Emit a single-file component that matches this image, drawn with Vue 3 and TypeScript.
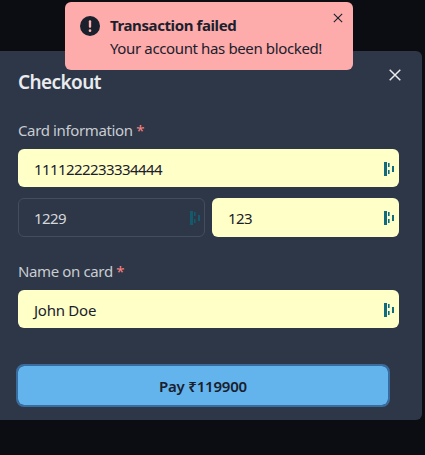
<script setup lang="ts">
const toastTitle: string = 'Transaction failed'
const toastText: string = 'Your account has been blocked!'
</script>

<template>
  <div class="page">
    <div class="toast">
      <svg class="alert" viewBox="0 0 24 24" width="20" height="20">
        <circle cx="12" cy="12" r="12" fill="#1a202c" />
        <rect x="10.6" y="5.2" width="2.8" height="9" rx="1.2" fill="#feb2b2" />
        <circle cx="12" cy="17.6" r="1.6" fill="#feb2b2" />
      </svg>
      <div class="toast-body">
        <div class="toast-title">{{ toastTitle }}</div>
        <div class="toast-text">{{ toastText }}</div>
      </div>
      <svg class="toast-close" viewBox="0 0 12 12" width="10" height="10">
        <path d="M1 1 11 11M11 1 1 11" stroke="#1a202c" stroke-width="1.3" fill="none" />
      </svg>
    </div>

    <section class="modal">
      <header class="head">
        <h2>Checkout</h2>
        <svg class="close" viewBox="0 0 12 12" width="12" height="12">
          <path d="M.7.7 11.3 11.3M11.3.7.7 11.3" stroke="#e9ebee" stroke-width="1.5" fill="none" />
        </svg>
      </header>

      <div class="form">
        <label class="label first">Card information <span class="req">*</span></label>
        <div class="field filled">
          <span class="digits">1111222233334444</span>
          <svg class="mark" viewBox="0 0 10 14" width="10" height="14"><path d="M0 0h3v14H0zM4 1h1.6v4H4zM4 8h1.6v4H4zM8 4h2v6H8z" /></svg>
        </div>
        <div class="row">
          <div class="field empty">
            <span class="digits">1229</span>
            <svg class="mark" viewBox="0 0 10 14" width="10" height="14"><path d="M0 0h3v14H0zM4 1h1.6v4H4zM4 8h1.6v4H4zM8 4h2v6H8z" /></svg>
          </div>
          <div class="field filled">
            <span class="digits">123</span>
            <svg class="mark" viewBox="0 0 10 14" width="10" height="14"><path d="M0 0h3v14H0zM4 1h1.6v4H4zM4 8h1.6v4H4zM8 4h2v6H8z" /></svg>
          </div>
        </div>
        <label class="label second">Name on card <span class="req">*</span></label>
        <div class="field filled">
          <span class="name">John Doe</span>
          <svg class="mark" viewBox="0 0 10 14" width="10" height="14"><path d="M0 0h3v14H0zM4 1h1.6v4H4zM4 8h1.6v4H4zM8 4h2v6H8z" /></svg>
        </div>
        <button class="pay" type="button">Pay ₹119900</button>
      </div>
    </section>
  </div>
</template>

<style>
html, body { margin: 0; background: #0b0d12; }
</style>

<style scoped>
.page {
  position: relative;
  width: 425px;
  height: 455px;
  overflow: hidden;
  padding-top: 51px;
  box-sizing: border-box;
  background: #0b0d12;
  font-family: "Noto Sans", sans-serif;
  letter-spacing: -0.37px;
  font-size: 15px;
  color: #1a202c;
}
.toast {
  position: absolute;
  left: 65px;
  top: 2px;
  width: 288px;
  height: 68px;
  box-sizing: border-box;
  display: flex;
  padding: 11px 0 0 15px;
  background: #feabab;
  border-radius: 6px;
  z-index: 2;
}
.alert { margin-top: 3px; flex: none; }
.toast-body { margin-left: 10px; }
.toast-title { font-weight: 700; line-height: 24px; letter-spacing: -0.4px; }
.toast-text { line-height: 24px; margin-top: -1px; }
.toast-close { position: absolute; right: 10px; top: 11px; }
.modal {
  width: 422px;
  height: 369px;
  box-sizing: border-box;
  background: #2d3748;
  border-radius: 0 6px 6px 0;
}
.head {
  display: flex;
  justify-content: space-between;
  padding: 16px 21px 0 18px;
}
.head h2 {
  margin: 0;
  font-size: 19px;
  font-weight: 600;
  line-height: 30px;
  letter-spacing: -0.6px;
  color: #e9ebee;
}
.close { margin-top: 2px; }
.form { padding: 0 23px 0 18px; }
.label {
  display: block;
  line-height: 24px;
  color: #c9ccd1;
}
.label.first { margin-top: 21px; }
.label.second { margin-top: 22px; }
.req { color: #fc8181; }
.field {
  height: 38px;
  box-sizing: border-box;
  display: flex;
  align-items: center;
  justify-content: space-between;
  padding: 1px 5px 0 16px;
  border-radius: 6px;
}
.digits { letter-spacing: -0.58px; }
.name { letter-spacing: -0.25px; }
.filled { background: #ffffc8; color: #1a202c; margin-top: 7px; }
.empty { border: 1px solid #434d5e; color: #d5d7db; padding-left: 15px; padding-right: 4px; }
.row {
  display: grid;
  grid-template-columns: 1fr 1fr;
  column-gap: 7px;
  margin-top: 11px;
}
.row .field { height: 39px; margin-top: 0; }
.mark { fill: #0f6b7d; flex: none; }
.empty .mark { fill: #125a6c; }
.pay {
  display: block;
  width: 370px;
  height: 39px;
  margin-top: 38px;
  border: none;
  border-radius: 6px;
  outline: 2px solid #3a6d9f;
  background: #63b3ed;
  color: #1a202c;
  font-family: inherit;
  font-size: 15px;
  letter-spacing: -0.2px;
  font-weight: 600;
}
</style>
